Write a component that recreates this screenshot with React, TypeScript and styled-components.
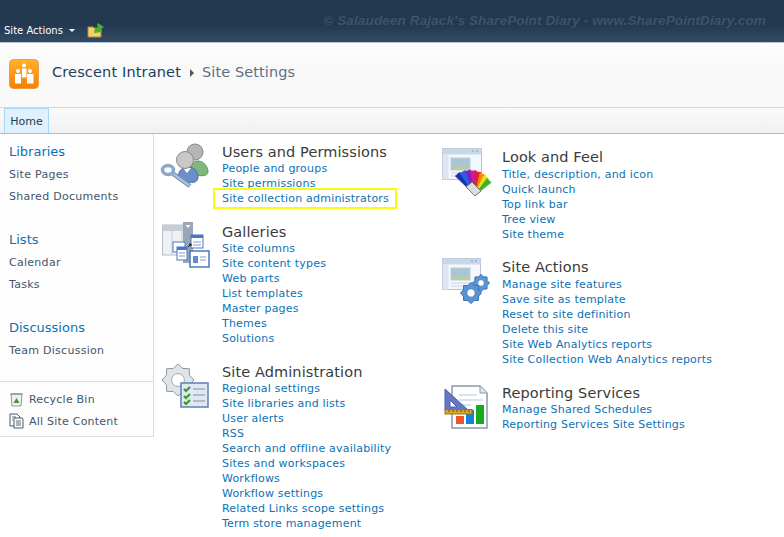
import styled, { createGlobalStyle } from 'styled-components';

const GlobalStyle = createGlobalStyle`
  html, body {
    margin: 0;
    padding: 0;
    background: #fff;
    font-family: "DejaVu Sans", Verdana, sans-serif;
  }
`;

const Page = styled.div`
  width: 784px;
  height: 537px;
  overflow: hidden;
  display: flex;
  flex-direction: column;
`;

const TopBar = styled.div`
  height: 43px;
  box-sizing: border-box;
  flex: none;
  background: linear-gradient(#21384f 0, #21384f 24px, #344b66 42px);
  border-bottom: 1px solid #b4c6d8;
  display: flex;
  align-items: flex-end;
  justify-content: space-between;
  padding: 0 18px 4px 4px;
`;

const ActionsGroup = styled.div`
  display: flex;
  align-items: center;
  color: #fff;
  font-size: 10px;
  height: 16px;
`;

const Caret = styled.span`
  width: 0;
  height: 0;
  margin: 1px 0 0 6px;
  border-left: 3px solid transparent;
  border-right: 3px solid transparent;
  border-top: 3px solid #fff;
`;

const FolderIcon = styled.svg`
  width: 18px;
  height: 16px;
  margin-left: 12px;
`;

const Watermark = styled.div`
  font-family: "Liberation Sans", Arial, sans-serif;
  font-size: 13.5px;
  font-style: italic;
  font-weight: 700;
  letter-spacing: 0.13px;
  color: #3d5369;
  margin-bottom: 10px;
  white-space: nowrap;
`;

const TitleBand = styled.div`
  height: 65px;
  flex: none;
  box-sizing: border-box;
  background: linear-gradient(#fefefe, #f9f9f9 20px);
  border-bottom: 1px solid #d8d8d8;
  display: flex;
  align-items: center;
  padding: 0 0 6px 9px;
`;

const SiteLogo = styled.svg`
  width: 31px;
  height: 31px;
  margin: 4px 12px 0 0;
`;

const SiteName = styled.span`
  font-size: 14.5px;
  letter-spacing: 0.15px;
  color: #1d3f5e;
`;

const CrumbArrow = styled.span`
  width: 0;
  height: 0;
  margin: 2px 8px 0 9px;
  border-top: 4px solid transparent;
  border-bottom: 4px solid transparent;
  border-left: 4px solid #555;
`;

const PageName = styled.span`
  font-size: 14.5px;
  letter-spacing: 0.1px;
  color: #5e6f85;
`;

const NavBar = styled.div`
  height: 26px;
  flex: none;
  box-sizing: border-box;
  background: linear-gradient(#fafafa, #f1f1f1);
  border-bottom: 1px solid #b9b9b9;
  padding-left: 4px;
  display: flex;
`;

const HomeTab = styled.div`
  width: 45px;
  height: 25px;
  box-sizing: border-box;
  background: #dff1fd;
  border: 1px solid #a8d8f5;
  border-bottom: none;
  color: #1d3f5e;
  font-size: 11px;
  display: flex;
  align-items: center;
  justify-content: center;
`;

const Body = styled.div`
  display: flex;
  flex: 1;
  align-items: flex-start;
`;

const Sidebar = styled.nav`
  width: 154px;
  height: 303px;
  flex: none;
  box-sizing: border-box;
  background: #fdfdfd;
  border-right: 1px solid #dcdcdc;
  border-bottom: 1px solid #dcdcdc;
  display: flex;
  flex-direction: column;
`;

const SideLinks = styled.div`
  height: 248px;
  flex: none;
  box-sizing: border-box;
  padding: 8px 0 0 9px;
  border-bottom: 1px solid #dcdcdc;
`;

const SideSection = styled.div`
  height: 88px;
`;

const SideHeading = styled.div`
  font-size: 13px;
  line-height: 20px;
  height: 22px;
  color: #0b72b5;
`;

const SideItem = styled.div`
  font-size: 11px;
  letter-spacing: 0.28px;
  line-height: 22px;
  height: 22px;
  color: #44566c;
`;

const SideTools = styled.div`
  padding: 6px 0 0 9px;
`;

const ToolRow = styled.div`
  display: flex;
  align-items: center;
  height: 22px;
  font-size: 11px;
  letter-spacing: 0.22px;
  color: #44566c;
  gap: 5px;
`;

const ToolIcon = styled.svg`
  width: 15px;
  height: 16px;
`;

const Content = styled.main`
  display: flex;
  padding: 8px 0 0 8px;
`;

const Column = styled.div<{ $width: number; $top?: number }>`
  width: ${(p) => p.$width}px;
  padding-top: ${(p) => p.$top ?? 0}px;
  display: flex;
  flex-direction: column;
`;

const Group = styled.section<{ $height: number }>`
  display: flex;
  height: ${(p) => p.$height}px;
`;

const GroupIcon = styled.svg`
  width: 48px;
  height: 48px;
  margin: 2px 12px 0 0;
  flex: none;
  overflow: visible;
`;

const GroupHeading = styled.h2<{ $tall?: boolean }>`
  margin: 0;
  font-size: 14.5px;
  font-weight: 400;
  letter-spacing: 0.1px;
  line-height: 20px;
  height: ${(p) => (p.$tall ? 20 : 19)}px;
  color: #3b3b3b;
`;

const LinkList = styled.ul`
  list-style: none;
  margin: 0;
  padding: 0;
`;

const LinkItem = styled.li`
  font-size: 11px;
  letter-spacing: 0.2px;
  line-height: 15px;
  height: 15px;
  color: #0b72b5;
  white-space: nowrap;
  position: relative;
`;

const Highlight = styled.span`
  position: absolute;
  left: -9px;
  top: -3px;
  width: 184px;
  height: 21px;
  box-sizing: border-box;
  border: 2px solid #fcf80e;
`;

const PeopleIcon = () => (
  <GroupIcon viewBox="0 0 48 48">
    <path d="M28 30c0-8 3-13 8-13s10 5 10 11c0 4-7 5-18 2z" fill="#7fb77e" stroke="#5a9a5a" />
    <circle cx="33" cy="8" r="8" fill="#b5b5b5" stroke="#888" />
    <path d="M16 34c0-7 4-11 10-11s10 4 10 10c0 6-6 8-20 1z" fill="#6d8fc9" stroke="#4e6fa8" />
    <path d="M21 24l4 5 4-5z" fill="#fff" />
    <circle cx="23" cy="16" r="8.500" fill="#c8c8c8" stroke="#8a8a8a" />
    <path d="M10 29l18 13" stroke="#6f8cae" strokeWidth="4.500" />
    <path d="M10 29l18 13" stroke="#a9c0d8" strokeWidth="2.500" />
    <ellipse cx="6" cy="26" rx="5.500" ry="4.500" fill="#fff" stroke="#8aa8c8" strokeWidth="3.500" />
  </GroupIcon>
);

const GalleryIcon = () => (
  <GroupIcon viewBox="0 0 48 48">
    <rect x="0.500" y="1" width="30" height="30" fill="#eef0f3" stroke="#b7bec8" />
    <rect x="0.500" y="1" width="30" height="6" fill="#c7cdd6" />
    <path d="M10 7v24M20 7v24" stroke="#c7cdd6" />
    <rect x="21" y="-2" width="10" height="41" fill="#9aa6b8" />
    <path d="M23.500 1h5l-2.500 3z" fill="#fff" />
    <rect x="11" y="18" width="12" height="10" fill="#fff" stroke="#4a78c0" />
    <rect x="15" y="23" width="10" height="13" fill="#fff" stroke="#4a78c0" />
    <rect x="15" y="23" width="10" height="3" fill="#4a78c0" />
    <path d="M17 29h6M17 32h6" stroke="#7f9cc8" />
    <rect x="29" y="11" width="12" height="13" fill="#fff" stroke="#4a78c0" />
    <rect x="29" y="11" width="12" height="3" fill="#4a78c0" />
    <path d="M31 18h8M31 21h8" stroke="#7f9cc8" />
    <path d="M26 23l3-3M27 20h2v2" stroke="#111" fill="none" />
    <rect x="28" y="27" width="19" height="16" fill="#fff" stroke="#4a78c0" strokeWidth="1.500" />
    <rect x="31" y="32" width="5" height="7" fill="#5d8ed0" />
    <path d="M38 33h6M38 36h6" stroke="#7f9cc8" />
  </GroupIcon>
);

const gearPoints = Array.from({ length: 16 }, (_, i) => {
  const a = (i * Math.PI) / 8;
  const r = i % 2 === 0 ? 1 : 0.78;
  return `${(Math.cos(a) * r).toFixed(3)},${(Math.sin(a) * r).toFixed(3)}`;
}).join(' ');

const Gear = ({ x, y, r, fill, stroke }: { x: number; y: number; r: number; fill: string; stroke: string }) => (
  <g transform={`translate(${x} ${y}) scale(${r})`}>
    <polygon points={gearPoints} fill={fill} stroke={stroke} strokeWidth={1 / r} strokeLinejoin="round" />
    <circle r="0.4" fill="#fff" stroke={stroke} strokeWidth={0.8 / r} />
  </g>
);

const AdminIcon = () => (
  <GroupIcon viewBox="0 0 48 48">
    <Gear x={16} y={16} r={16} fill="#dfe4e8" stroke="#8f979f" />
    <rect x="19" y="19" width="27" height="24" fill="#dfe7f5" stroke="#5f7fb5" strokeWidth="1.500" />
    <path d="M22 25l2 2 4-4M22 32l2 2 4-4M22 38l2 2 4-4" fill="none" stroke="#3a9a25" strokeWidth="2.200" />
    <path d="M31 25h12M31 31h12M31 37h12" stroke="#8a8f96" />
  </GroupIcon>
);

const WindowBase = ({ width, height }: { width: number; height: number }) => (
  <>
    <rect x="0.500" y="-0.500" width={width} height={height} fill="#f4f7fb" stroke="#b5c3d3" />
    <rect x="0.500" y="-0.500" width={width} height="6" fill="#c9d8e8" />
    <path d={`M${width - 9} 2h2M${width - 5} 2h2`} stroke="#8a9aac" />
    <rect x="0.500" y="5.500" width="6" height={height - 6} fill="#dce6f1" />
    <rect x="9" y="9" width="19" height="12" fill="#a9c6d6" stroke="#c2ccd6" />
    <path d="M10 20l6-5 5 3 6-2v4z" fill="#b9cba0" />
    <path d="M9 24h19M9 27h15" stroke="#ccd5df" />
  </>
);

const fanColors = ['#1c2fb8', '#2a60e0', '#7a22c0', '#d21a8c', '#e0222a', '#f08a12', '#f4e012', '#3cb52c'];

const LookIcon = () => (
  <GroupIcon viewBox="0 0 48 48">
    <WindowBase width={39} height={31} />
    <g transform="translate(33 46)">
      {fanColors.map((c, i) => (
        <path
          key={c}
          d={`M0 0L-2.600 -${27 - i} L2.600 -${27 - i}z`}
          fill={c}
          stroke={c}
          transform={`rotate(${i * 12 - 40})`}
        />
      ))}
    </g>
    <path d="M24 38l6-5 9 9-6 5z" fill="#dcdcdc" stroke="#777" />
  </GroupIcon>
);

const ActionsIcon = () => (
  <GroupIcon viewBox="0 0 48 48">
    <WindowBase width={38} height={31} />
    <Gear x={39} y={24} r={8.5} fill="#5c94d8" stroke="#3a70b4" />
    <Gear x={29} y={34} r={10.500} fill="#5c94d8" stroke="#3a70b4" />
  </GroupIcon>
);

const ReportIcon = () => (
  <GroupIcon viewBox="0 0 48 48">
    <path d="M10 1h28l7 7v35H10z" fill="#fff" stroke="#8a99ad" strokeWidth="1.500" />
    <path d="M38 1v7h7" fill="#dfe6ee" stroke="#8a99ad" />
    <path d="M17 10h18M17 15h24M17 20h12" stroke="#b9c6d8" />
    <rect x="14" y="31" width="8" height="8" fill="#f0562c" />
    <rect x="24" y="25" width="8" height="14" fill="#1283dc" />
    <rect x="34" y="20" width="8" height="19" fill="#19aa1e" />
    <path d="M3 4l23 21H3z" fill="#6379c8" stroke="#4a5fa8" />
    <path d="M8 15l7 7H8z" fill="#fff" stroke="#4a5fa8" />
    <rect x="3" y="24.500" width="27" height="4.500" fill="#dca62a" stroke="#9a7414" />
    <path d="M7 25v2M11 25v2M15 25v2M19 25v2M23 25v2M27 25v2" stroke="#6a4f0c" />
  </GroupIcon>
);

type SettingsGroup = {
  title: string;
  icon: React.ReactNode;
  height: number;
  tall?: boolean;
  links: string[];
};

const groupsLeft: SettingsGroup[] = [
  {
    title: 'Users and Permissions',
    icon: <PeopleIcon />,
    height: 80,
    links: ['People and groups', 'Site permissions', 'Site collection administrators'],
  },
  {
    title: 'Galleries',
    icon: <GalleryIcon />,
    height: 140,
    links: ['Site columns', 'Site content types', 'Web parts', 'List templates', 'Master pages', 'Themes', 'Solutions'],
  },
  {
    title: 'Site Administration',
    icon: <AdminIcon />,
    height: 175,
    links: [
      'Regional settings',
      'Site libraries and lists',
      'User alerts',
      'RSS',
      'Search and offline availability',
      'Sites and workspaces',
      'Workflows',
      'Workflow settings',
      'Related Links scope settings',
      'Term store management',
    ],
  },
];

const groupsRight: SettingsGroup[] = [
  {
    title: 'Look and Feel',
    icon: <LookIcon />,
    height: 110,
    tall: true,
    links: ['Title, description, and icon', 'Quick launch', 'Top link bar', 'Tree view', 'Site theme'],
  },
  {
    title: 'Site Actions',
    icon: <ActionsIcon />,
    height: 126,
    tall: true,
    links: [
      'Manage site features',
      'Save site as template',
      'Reset to site definition',
      'Delete this site',
      'Site Web Analytics reports',
      'Site Collection Web Analytics reports',
    ],
  },
  {
    title: 'Reporting Services',
    icon: <ReportIcon />,
    height: 60,
    links: ['Manage Shared Schedules', 'Reporting Services Site Settings'],
  },
];

const sideSections = [
  { title: 'Libraries', items: ['Site Pages', 'Shared Documents'] },
  { title: 'Lists', items: ['Calendar', 'Tasks'] },
  { title: 'Discussions', items: ['Team Discussion'] },
];

const renderGroup = (g: SettingsGroup) => (
  <Group key={g.title} $height={g.height}>
    {g.icon}
    <div>
      <GroupHeading $tall={g.tall}>{g.title}</GroupHeading>
      <LinkList>
        {g.links.map((l) => (
          <LinkItem key={l}>
            {l}
            {l === 'Site collection administrators' && <Highlight />}
          </LinkItem>
        ))}
      </LinkList>
    </div>
  </Group>
);

const App = () => (
  <Page>
    <GlobalStyle />
    <TopBar>
      <ActionsGroup>
        Site Actions
        <Caret />
        <FolderIcon viewBox="0 0 18 16">
          <path d="M1 5h5l1 1h7v9H1z" fill="#f2cf74" stroke="#b58a35" />
          <path d="M7 11l1-5h3l-1-3 1-2 6 4-3 2 1 3z" fill="#4fae2c" />
        </FolderIcon>
      </ActionsGroup>
      <Watermark>© Salaudeen Rajack's SharePoint Diary - www.SharePointDiary.com</Watermark>
    </TopBar>
    <TitleBand>
      <SiteLogo viewBox="0 0 31 31">
        <defs>
          <linearGradient id="logoFill" x1="0" y1="0" x2="0" y2="1">
            <stop offset="0" stopColor="#ffb12e" />
            <stop offset="1" stopColor="#f77f00" />
          </linearGradient>
        </defs>
        <rect x="0.500" y="0.500" width="29" height="29" rx="4" fill="url(#logoFill)" stroke="#e8a04a" />
        <circle cx="15" cy="6.500" r="2" fill="#fff" />
        <circle cx="9" cy="12" r="2" fill="#fff" />
        <circle cx="21" cy="12" r="2" fill="#fff" />
        <rect x="13" y="9.500" width="4.500" height="9" fill="#fff" />
        <rect x="6" y="15" width="6" height="9.500" fill="#fff" />
        <rect x="18" y="15" width="6.500" height="9.500" fill="#fff" />
      </SiteLogo>
      <SiteName>Crescent Intranet</SiteName>
      <CrumbArrow />
      <PageName>Site Settings</PageName>
    </TitleBand>
    <NavBar>
      <HomeTab>Home</HomeTab>
    </NavBar>
    <Body>
      <Sidebar>
        <SideLinks>
          {sideSections.map((s) => (
            <SideSection key={s.title}>
              <SideHeading>{s.title}</SideHeading>
              {s.items.map((i) => (
                <SideItem key={i}>{i}</SideItem>
              ))}
            </SideSection>
          ))}
        </SideLinks>
        <SideTools>
          <ToolRow>
            <ToolIcon viewBox="0 0 15 16">
              <path d="M2 3h11l-1 12H3z" fill="#eef1f0" stroke="#8d9a98" />
              <path d="M1.500 3h12" stroke="#8d9a98" strokeWidth="1.500" />
              <path d="M7.500 7l3 5h-6z" fill="#4d8f3a" />
            </ToolIcon>
            Recycle Bin
          </ToolRow>
          <ToolRow>
            <ToolIcon viewBox="0 0 15 16">
              <path d="M1 1h7l3 3v9H1z" fill="#fff" stroke="#49586c" />
              <path d="M5 5h8l1 1v9H5z" fill="#fff" stroke="#49586c" />
              <path d="M3 4h4M3 7h1M7 8h5M7 10h5M7 12h5" stroke="#5b6b80" />
            </ToolIcon>
            All Site Content
          </ToolRow>
        </SideTools>
      </Sidebar>
      <Content>
        <Column $width={280}>{groupsLeft.map(renderGroup)}</Column>
        <Column $width={300} $top={5}>
          {groupsRight.map(renderGroup)}
        </Column>
      </Content>
    </Body>
  </Page>
);

export default App;
